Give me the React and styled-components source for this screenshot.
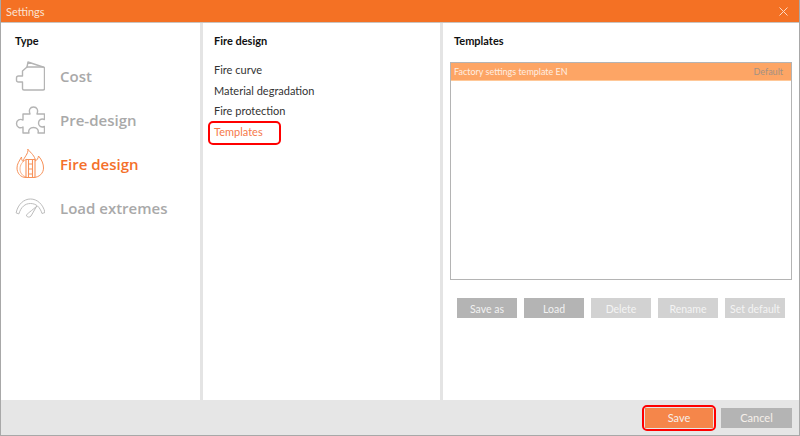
import React from 'react';
import styled, { createGlobalStyle } from 'styled-components';

const Global = createGlobalStyle`
  html, body { margin: 0; padding: 0; background: #fff; }
  body { font-family: Lato, "Open Sans", "Liberation Sans", sans-serif; }
`;

const Window = styled.div`
  width: 800px;
  height: 436px;
  display: flex;
  flex-direction: column;
  box-sizing: border-box;
  border-left: 1px solid #a8a8a8;
  border-right: 1px solid #a8a8a8;
  border-bottom: 1px solid #a8a8a8;
  overflow: hidden;
`;

const TitleBar = styled.header`
  height: 22px;
  margin: 0 -1px;
  flex: none;
  box-sizing: content-box;
  background: #f47124;
  border-bottom: 1px solid #c9c3be;
  display: flex;
  align-items: center;
  justify-content: space-between;
  padding: 0 12px 0 6px;
  color: #fbe2d2;
  font-size: 11px;
`;

const Columns = styled.main`
  flex: 1;
  min-height: 0;
  display: grid;
  grid-template-columns: 202px 240px 1fr;
  background: #fff;
`;

const Column = styled.section`
  border-right: ${(p) => (p.$last ? 'none' : '3px solid #e4e4e4')};
  padding: ${(p) => p.$padding};
  min-width: 0;
`;

const Heading = styled.h2`
  margin: 0 0 0 ${(p) => p.$inset || 0}px;
  font-size: 11px;
  line-height: 14px;
  font-weight: 700;
  color: #111;
`;

const TypeList = styled.ul`
  list-style: none;
  margin: 13px 0 0;
  padding: 0;
  display: flex;
  flex-direction: column;
  gap: 14px;
`;

const TypeItem = styled.li`
  height: 30px;
  display: flex;
  align-items: center;
  gap: 15px;
  font-family: "Open Sans", sans-serif;
  font-size: 15px;
  font-weight: 600;
  color: ${(p) => (p.$active ? '#f4702a' : '#a9a9a9')};
`;

const TypeIcon = styled.svg`
  width: 30px;
  height: 30px;
  flex: none;
  fill: none;
  stroke: ${(p) => (p.$active ? '#f7925a' : '#b4b4b4')};
  stroke-width: 1.4;
  stroke-linejoin: round;
  stroke-linecap: round;
`;

const SubList = styled.ul`
  list-style: none;
  margin: 15px 0 0;
  padding: 0;
  display: flex;
  flex-direction: column;
  gap: 6.7px;
`;

const SubItem = styled.li`
  position: relative;
  height: 14px;
  line-height: 14px;
  font-size: 11px;
  color: ${(p) => (p.$active ? '#f5794a' : '#333')};

  ${(p) => p.$active && `
    &::after {
      content: '';
      position: absolute;
      left: -6px;
      top: -4px;
      width: 73px;
      height: 24px;
      box-sizing: border-box;
      border: 2.5px solid #f00;
      border-radius: 5px;
    }
  `}
`;

const TemplateBox = styled.div`
  margin-top: 14px;
  height: 218px;
  border: 1px solid #b4b4b4;
  box-sizing: border-box;
  background: #fff;
`;

const TemplateRow = styled.div`
  height: 18px;
  box-sizing: border-box;
  background: #fda565;
  border-bottom: 1px solid #ffc898;
  display: flex;
  align-items: center;
  justify-content: space-between;
  padding: 0 8px 0 3px;
  font-size: 9px;
  color: #fdeee2;
`;

const DefaultTag = styled.span`
  color: #a39184;
`;

const TemplateActions = styled.div`
  margin: 18px 0 0 7px;
  display: flex;
  gap: 7px;
`;

const ActionButton = styled.button`
  width: 60px;
  height: 20px;
  padding: 1px 0 0;
  border: none;
  background: ${(p) => (p.$enabled ? '#b4b4b4' : '#d2d2d2')};
  color: ${(p) => (p.$enabled ? '#f2f2f2' : '#f4f4f4')};
  font: inherit;
  font-size: 10.5px;
  white-space: nowrap;
`;

const Footer = styled.footer`
  height: 35px;
  flex: none;
  background: #e6e6e6;
  display: flex;
  align-items: center;
  justify-content: flex-end;
  gap: 8px;
  padding: 0 7px 0 0;
`;

const FooterButton = styled.button`
  position: relative;
  width: ${(p) => (p.$primary ? 68 : 71)}px;
  height: 20px;
  padding: 0;
  border: none;
  background: ${(p) => (p.$primary ? '#f5864a' : '#b4b4b4')};
  color: #f6f0ea;
  font: inherit;
  font-size: 11px;

  ${(p) => p.$primary && `
    &::after {
      content: '';
      position: absolute;
      inset: -3px;
      border: 2.5px solid #f00;
      border-radius: 5px;
    }
  `}
`;

const CloseIcon = () => (
  <svg width="9" height="9" viewBox="0 0 9 9" fill="none" stroke="#fbd9c4" strokeWidth="1">
    <path d="M.5.5l8 8M8.5.5l-8 8" />
  </svg>
);

const CostIcon = ({ active }) => (
  <TypeIcon $active={active} viewBox="0 0 30 30">
    <path d="M7.5 10 L12 6 H28 Q29.5 6 29.5 7.5 V27.5 Q29.5 29 28 29 H9 Q7.5 29 7.5 27.5 V21 H3.5 Q1.5 21 1.5 19 V17 Q1.5 15 3.5 15 H7.5 Z" />
    <path d="M12 6 L13 1 L28 6" />
  </TypeIcon>
);

const PuzzleIcon = ({ active }) => (
  <TypeIcon $active={active} viewBox="0 0 30 30">
    <path d="M8 9 H15 C13.5 5 15 2 18.5 2 C22 2 23.5 5 22 9 H29.5 V14.5 C26 13 23.5 15 23.5 18 C23.5 21 26 23 29.5 21.5 V28 H23 C24 25 22 22.5 18.5 22.5 C15 22.5 13 25 14 28 H8 V22 C5 24 1.5 22 1.5 18.5 C1.5 15 5 13.5 8 15 Z" />
  </TypeIcon>
);

const FireIcon = ({ active }) => (
  <TypeIcon $active={active} viewBox="0 0 30 30">
    <path d="M13 .5 C16 4 20 7 20.5 12 C22 11 23.2 9.5 23.5 7 C27 11 28.5 15 28.5 19 C28.5 24 24.5 28.5 18 28.5 H11 C5.5 28.5 2 24 2 19 C2 15 4 12.5 6.5 8 C6.5 10 7 11.5 8 12.5 C9 8 13.5 5 13 .5 Z" strokeWidth="1" />
    <path d="M11 10.5 C7 13 5 16 5 20 C5 24 7.5 27 11 28" strokeWidth="0.7" />
    <path d="M11 28.5 V10.5 H20 V28.5 Z M13.5 10.5 V28.5 M17.5 10.5 V28.5" strokeWidth="1.1" />
    <path d="M13.5 15 H17.5 M13.5 20 H17.5 M13.5 25 H17.5" strokeWidth="1.1" />
  </TypeIcon>
);

const GaugeIcon = ({ active }) => (
  <TypeIcon $active={active} viewBox="0 0 30 30">
    <path d="M1.2 19.5 C3 11 9 6 15.5 6 C22 6 28 11 30 19.5 L27 20.5 C25 14 21 10.5 15.5 10.5 C10 10.5 6 14 4 20.5 Z" strokeWidth="0.9" />
    <path d="M21.5 13.5 L16 23 C14.5 25 11 24 11.5 22 C12 21 13 20.5 21.5 13.5 Z" strokeWidth="0.9" />
  </TypeIcon>
);

const types = [
  { label: 'Cost', Icon: CostIcon },
  { label: 'Pre-design', Icon: PuzzleIcon },
  { label: 'Fire design', Icon: FireIcon, active: true },
  { label: 'Load extremes', Icon: GaugeIcon },
];

const subItems = ['Fire curve', 'Material degradation', 'Fire protection', 'Templates'];

const actions = [
  { label: 'Save as', enabled: true },
  { label: 'Load', enabled: true },
  { label: 'Delete' },
  { label: 'Rename' },
  { label: 'Set default' },
];

const App = () => (
  <>
    <Global />
    <Window>
      <TitleBar>
        <span>Settings</span>
        <CloseIcon />
      </TitleBar>
      <Columns>
        <Column $padding="11px 0 0 14px">
          <Heading>Type</Heading>
          <TypeList>
            {types.map(({ label, Icon, active }) => (
              <TypeItem key={label} $active={active}>
                <Icon active={active} />
                {label}
              </TypeItem>
            ))}
          </TypeList>
        </Column>
        <Column $padding="11px 0 0 11px">
          <Heading>Fire design</Heading>
          <SubList>
            {subItems.map((item) => (
              <SubItem key={item} $active={item === 'Templates'}>{item}</SubItem>
            ))}
          </SubList>
        </Column>
        <Column $last $padding="11px 7px 0 7px">
          <Heading $inset={4}>Templates</Heading>
          <TemplateBox>
            <TemplateRow>
              <span>Factory settings template EN</span>
              <DefaultTag>Default</DefaultTag>
            </TemplateRow>
          </TemplateBox>
          <TemplateActions>
            {actions.map((a) => (
              <ActionButton key={a.label} $enabled={a.enabled}>{a.label}</ActionButton>
            ))}
          </TemplateActions>
        </Column>
      </Columns>
      <Footer>
        <FooterButton $primary>Save</FooterButton>
        <FooterButton>Cancel</FooterButton>
      </Footer>
    </Window>
  </>
);

export default App;
